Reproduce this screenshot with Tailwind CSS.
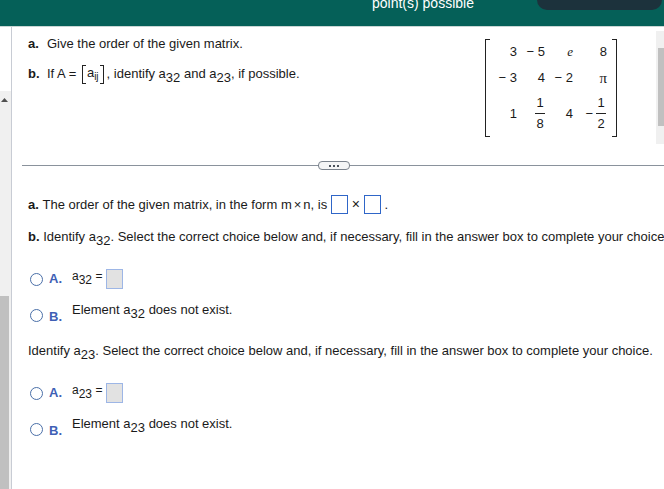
<!doctype html>
<html>
  <head>
    <meta charset="UTF-8" />
    <meta name="viewport" content="width=device-width, initial-scale=1.0" />
    <script src="https://cdn.jsdelivr.net/npm/@tailwindcss/browser@4"></script>
  </head>
  <body class="w-[664px] h-[489px] overflow-hidden bg-white font-['Liberation_Sans',Arial,sans-serif] text-[13px] text-[#1a1a1a]">
    <!-- top bar -->
    <header class="h-[27px] bg-[#056058] border-b border-[#c9d6d4] flex overflow-hidden">
      <span class="ml-[372px] -mt-[5px] text-[14px] leading-[16px] text-white">point(s) possible</span>
      <div class="ml-auto mr-[2px] -mt-[10px] w-[125px] h-[20px] rounded-[10px] bg-[#1c323c]"></div>
    </header>

    <div class="flex h-[462px]">
      <!-- left scrollbar -->
      <aside class="w-[12px] shrink-0 border-r border-[#c8ccd4] flex flex-col">
        <div class="h-[64px] bg-white"></div>
        <div class="flex-1 bg-[#f0f0f0] flex flex-col">
          <div class="h-[205px] pt-[7px] pl-[1px]">
            <svg width="7" height="4" viewBox="0 0 7 4"><path d="M3.5 0 7 4H0z" fill="#505050"/></svg>
          </div>
          <div class="flex-1 w-[9px] bg-[#c0c0c0]"></div>
        </div>
      </aside>

      <main class="flex-1 min-w-0">
        <!-- question stem -->
        <section class="h-[132px] flex relative">
          <div class="pl-[16px] pt-[9px] w-[460px]">
            <p class="leading-[16px]"><b class="inline-block w-[19px]">a.</b>Give the order of the given matrix.</p>
            <p class="mt-[13px] leading-[16px] whitespace-nowrap"><b class="inline-block w-[19px]">b.</b>If A =&nbsp;<span class="inline-block align-middle ml-[2px] mr-[3px] h-[19px] leading-[16px] border-x border-[#222] px-[4px] relative"><span class="absolute left-0 top-0 w-[3px] h-full border-y border-[#222]"></span><span class="absolute right-0 top-0 w-[3px] h-full border-y border-[#222]"></span>a<sub class="text-[10px] leading-none static align-[-3px]">ij</sub></span>,&nbsp;identify a<sub class="text-[13px] leading-none static align-[-4px]">32</sub> and a<sub class="text-[13px] leading-none static align-[-4px]">23</sub>,&nbsp;if possible.</p>
          </div>

          <!-- matrix -->
          <div class="ml-[13px] mt-[12px] w-[132px] h-[98px] relative border-x border-[#222] grid grid-cols-[31px_28px_28px_34px] grid-rows-[24px_28px_45px] text-right">
            <span class="absolute left-0 top-0 w-[4px] h-full border-y border-[#222]"></span>
            <span class="absolute right-0 top-0 w-[4px] h-full border-y border-[#222]"></span>
            <span class="self-center pt-[2px]">3</span>
            <span class="self-center pt-[2px]">−&nbsp;5</span>
            <span class="self-center pt-[2px] font-['Liberation_Serif',serif] italic">e</span>
            <span class="self-center pt-[2px]">8</span>
            <span class="self-center pt-[2px]">−&nbsp;3</span>
            <span class="self-center pt-[2px]">4</span>
            <span class="self-center pt-[2px]">−&nbsp;2</span>
            <span class="self-center pt-[2px] font-['Liberation_Serif',serif] text-[15px]">π</span>
            <span class="self-center">1</span>
            <span class="self-center flex flex-col items-end"><span class="w-[10px] text-center border-b border-[#222] leading-[20px]">1</span><span class="w-[10px] text-center leading-[20px]">8</span></span>
            <span class="self-center">4</span>
            <span class="self-center flex justify-end items-center gap-[3px] pr-[1px]">−<span class="flex flex-col"><span class="w-[10px] text-center border-b border-[#222] leading-[20px]">1</span><span class="w-[10px] text-center leading-[20px]">2</span></span></span>
          </div>

          <!-- inner scrollbar -->
          <div class="absolute right-0 top-[4px] w-[8px] h-[113px] bg-[#f0f0f0] flex flex-col items-end">
            <div class="h-[17px]"></div>
            <div class="h-[78px] w-[6px] bg-[#c0c0c0]"></div>
          </div>
        </section>

        <!-- divider -->
        <div class="h-[13px] ml-[10px] flex items-center">
          <div class="w-[296px] h-px bg-[#8a929c]"></div>
          <div class="w-[32px] h-[9px] rounded-[4px] border border-[#7a828c] bg-[#f4f5f6] flex items-center justify-center gap-[2px] shrink-0">
            <i class="w-[2px] h-[2px] bg-[#4a525c]"></i><i class="w-[2px] h-[2px] bg-[#4a525c]"></i><i class="w-[2px] h-[2px] bg-[#4a525c]"></i>
          </div>
          <div class="flex-1 h-px bg-[#8a929c]"></div>
        </div>

        <!-- answers -->
        <section class="pl-[16px] whitespace-nowrap">
          <p class="mt-[23px] h-[19px] flex items-center"><b>a.</b>&nbsp;The order of the given matrix, in the form m<span class="mx-[2px]">×</span>n, is&nbsp;<span class="w-[17px] h-[19px] border border-[#2f66c8]"></span><span class="mx-[4px] text-[14px]">×</span><span class="w-[17px] h-[19px] border border-[#2f66c8]"></span>&nbsp;.</p>
          <p class="mt-[13px] h-[18px]"><b>b.</b>&nbsp;Identify a<sub class="text-[13px] leading-none static align-[-4px]">32</sub>.&nbsp;Select the correct choice below and, if necessary, fill in the answer box to complete your choice.</p>

          <div class="mt-[24px] ml-[2px] flex items-center h-[20px]">
            <span class="w-[13px] h-[13px] rounded-full border-[1.5px] border-[#4a6fa8] bg-white"></span>
            <b class="ml-[6px] w-[23px] text-[#3f5fb5]">A.</b>
            <span class="w-[34px] mb-[5px] text-[12px]">a<sub class="text-[12px] leading-none static align-[-4px]">32</sub>&nbsp;=</span><span class="w-[17px] h-[20px] border border-[#9db6e6] bg-[#e2e2e2]"></span>
          </div>
          <div class="mt-[11px] ml-[2px] flex h-[24px]">
            <span class="mt-[9px] w-[13px] h-[13px] rounded-full border-[1.5px] border-[#4a6fa8] bg-white"></span>
            <b class="ml-[6px] mt-[7px] w-[23px] text-[#3f5fb5]">B.</b>
            <span class="block">Element a<sub class="text-[13px] leading-none static align-[-4px]">32</sub>&nbsp;does not exist.</span>
          </div>

          <p class="mt-[17px] h-[18px]">Identify a<sub class="text-[13px] leading-none static align-[-4px]">23</sub>.&nbsp;Select the correct choice below and, if necessary, fill in the answer box to complete your choice.</p>

          <div class="mt-[24px] ml-[2px] flex items-center h-[20px]">
            <span class="w-[13px] h-[13px] rounded-full border-[1.5px] border-[#4a6fa8] bg-white"></span>
            <b class="ml-[6px] w-[23px] text-[#3f5fb5]">A.</b>
            <span class="w-[34px] mb-[5px] text-[12px]">a<sub class="text-[12px] leading-none static align-[-4px]">23</sub>&nbsp;=</span><span class="w-[17px] h-[20px] border border-[#9db6e6] bg-[#e2e2e2]"></span>
          </div>
          <div class="mt-[11px] ml-[2px] flex h-[24px]">
            <span class="mt-[9px] w-[13px] h-[13px] rounded-full border-[1.5px] border-[#4a6fa8] bg-white"></span>
            <b class="ml-[6px] mt-[7px] w-[23px] text-[#3f5fb5]">B.</b>
            <span class="block">Element a<sub class="text-[13px] leading-none static align-[-4px]">23</sub>&nbsp;does not exist.</span>
          </div>
        </section>
      </main>
    </div>
  </body>
</html>
